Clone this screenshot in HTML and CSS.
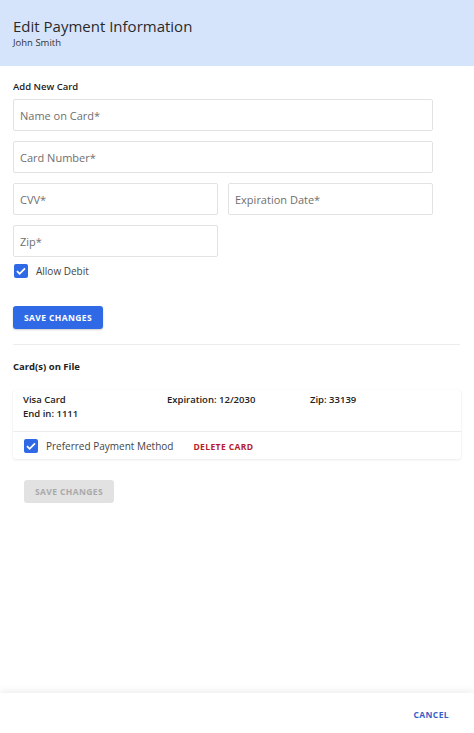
FILE: index.html
```html
<!DOCTYPE html>
<html lang="en">
<head>
    <meta charset="UTF-8">
    <title>Edit Payment Information</title>
    <link rel="stylesheet" href="styles.css">
</head>
<body>
<div class="dialog">
    <div class="dialog-header">
        <h1 class="title">Edit Payment Information</h1>
        <div class="subtitle">John Smith</div>
    </div>

    <div class="dialog-body">
        <div class="section-title">Add New Card</div>
        <div class="form">
            <input type="text" class="field" placeholder="Name on Card*">
            <input type="text" class="field" placeholder="Card Number*">
            <div class="field-row">
                <input type="text" class="field" placeholder="CVV*">
                <input type="text" class="field" placeholder="Expiration Date*">
            </div>
            <div class="field-row">
                <input type="text" class="field" placeholder="Zip*">
            </div>
        </div>

        <label class="check">
            <span class="box">
                <svg viewBox="0 0 14 14" width="14" height="14"><path d="M3 7.2l2.6 2.6L11 4.4" fill="none" stroke="#fff" stroke-width="1.8"/></svg>
            </span>
            Allow Debit
        </label>

        <button class="btn btn-primary">Save Changes</button>

        <hr class="divider">

        <div class="section-title bold">Card(s) on File</div>

        <div class="card">
            <div class="card-info">
                <div class="card-col">
                    <div>Visa Card</div>
                    <div>End in: 1111</div>
                </div>
                <div class="card-col">Expiration: 12/2030</div>
                <div class="card-col">Zip: 33139</div>
            </div>
            <div class="card-actions">
                <label class="check">
                    <span class="box">
                        <svg viewBox="0 0 14 14" width="14" height="14"><path d="M3 7.2l2.6 2.6L11 4.4" fill="none" stroke="#fff" stroke-width="1.8"/></svg>
                    </span>
                    Preferred Payment Method
                </label>
                <button class="btn btn-text-red">Delete Card</button>
            </div>
        </div>

        <button class="btn btn-disabled" disabled>Save Changes</button>
    </div>

    <div class="dialog-footer">
        <button class="btn btn-text-blue">Cancel</button>
    </div>
</div>
</body>
</html>
```

FILE: styles.css
```css
* {
    box-sizing: border-box;
}
*:focus {
    outline: none;
}

html, body {
    height: 100%;
}

body {
    margin: 0;
    font-family: "Open Sans", sans-serif;
    font-size: 11px;
    color: #222;
    background: #fff;
}

.dialog {
    height: 100%;
    display: flex;
    flex-direction: column;
}

.dialog-header {
    background: #d6e4fb;
    height: 66px;
    padding: 15px 13px 0 13px;
}
.dialog-header .title {
    margin: 0;
    font-size: 15px;
    font-weight: 400;
    line-height: 22px;
    color: #2a2a2a;
}
.dialog-header .subtitle {
    font-size: 9.5px;
    line-height: 12px;
    color: #333;
}

.dialog-body {
    flex: 1;
    padding: 14px 13px 0 13px;
}

.section-title {
    font-size: 9.5px;
    font-weight: 600;
    line-height: 14px;
    color: #222;
}
.section-title.bold {
    font-weight: 700;
}

.form {
    width: 420px;
    margin-top: 5px;
    display: flex;
    flex-direction: column;
    gap: 10px;
}
.field-row {
    display: grid;
    grid-template-columns: 1fr 1fr;
    gap: 10px;
}
.field {
    width: 100%;
    height: 32px;
    padding: 0 6px;
    border: 1px solid #e2e2e2;
    border-radius: 2px;
    font-family: "Open Sans", sans-serif;
    font-size: 11px;
    color: #333;
    background: #fff;
}
.field::placeholder {
    color: #6f6f6f;
}

.check {
    display: flex;
    align-items: center;
    gap: 8px;
    font-size: 10px;
    color: #444;
    line-height: 14px;
}
.check .box {
    display: inline-flex;
    width: 14px;
    height: 14px;
    border-radius: 2px;
    background: #2f69e6;
}

.dialog-body > .check {
    margin-top: 7px;
    padding-left: 1px;
}

.btn {
    border: 0;
    cursor: pointer;
    font-family: "Open Sans", sans-serif;
    font-size: 8.5px;
    font-weight: 700;
    letter-spacing: 0.4px;
    text-transform: uppercase;
    background: none;
    padding: 0;
}
.btn-primary {
    display: block;
    margin-top: 28px;
    width: 90px;
    height: 23px;
    border-radius: 3px;
    color: #fff;
    background: #2f69e6;
    box-shadow: 0 1px 2px rgba(0, 0, 0, 0.2);
}
.btn-disabled {
    display: block;
    margin: 21px 0 0 11px;
    width: 90px;
    height: 23px;
    border-radius: 3px;
    color: #a9a9a9;
    background: #e2e2e2;
}
.btn-text-red {
    color: #b51c2b;
    margin-left: 20px;
}
.btn-text-blue {
    color: #3a5fc8;
}

.divider {
    margin: 15px 0 0 0;
    width: 447px;
    border: 0;
    border-top: 1px solid #ececec;
}

.dialog-body > .section-title.bold {
    margin-top: 15px;
}

.card {
    width: 448px;
    margin-top: 16px;
    background: #fff;
    border-radius: 3px;
    box-shadow: 0 1px 3px rgba(0, 0, 0, 0.08), 0 0 1px rgba(0, 0, 0, 0.08);
}
.card-info {
    display: flex;
    padding: 3px 10px 10px 10px;
    border-bottom: 1px solid #ececec;
    font-size: 9.5px;
    font-weight: 600;
    line-height: 14px;
    color: #222;
}
.card-col:nth-child(1) {
    width: 144px;
}
.card-col:nth-child(2) {
    width: 143px;
}
.card-actions {
    display: flex;
    align-items: center;
    padding: 7px 11px 6px 11px;
}

.dialog-footer {
    height: 40px;
    display: flex;
    align-items: center;
    justify-content: flex-end;
    padding: 2px 25px 0 0;
    box-shadow: 0 -3px 6px rgba(0, 0, 0, 0.06);
}
```
